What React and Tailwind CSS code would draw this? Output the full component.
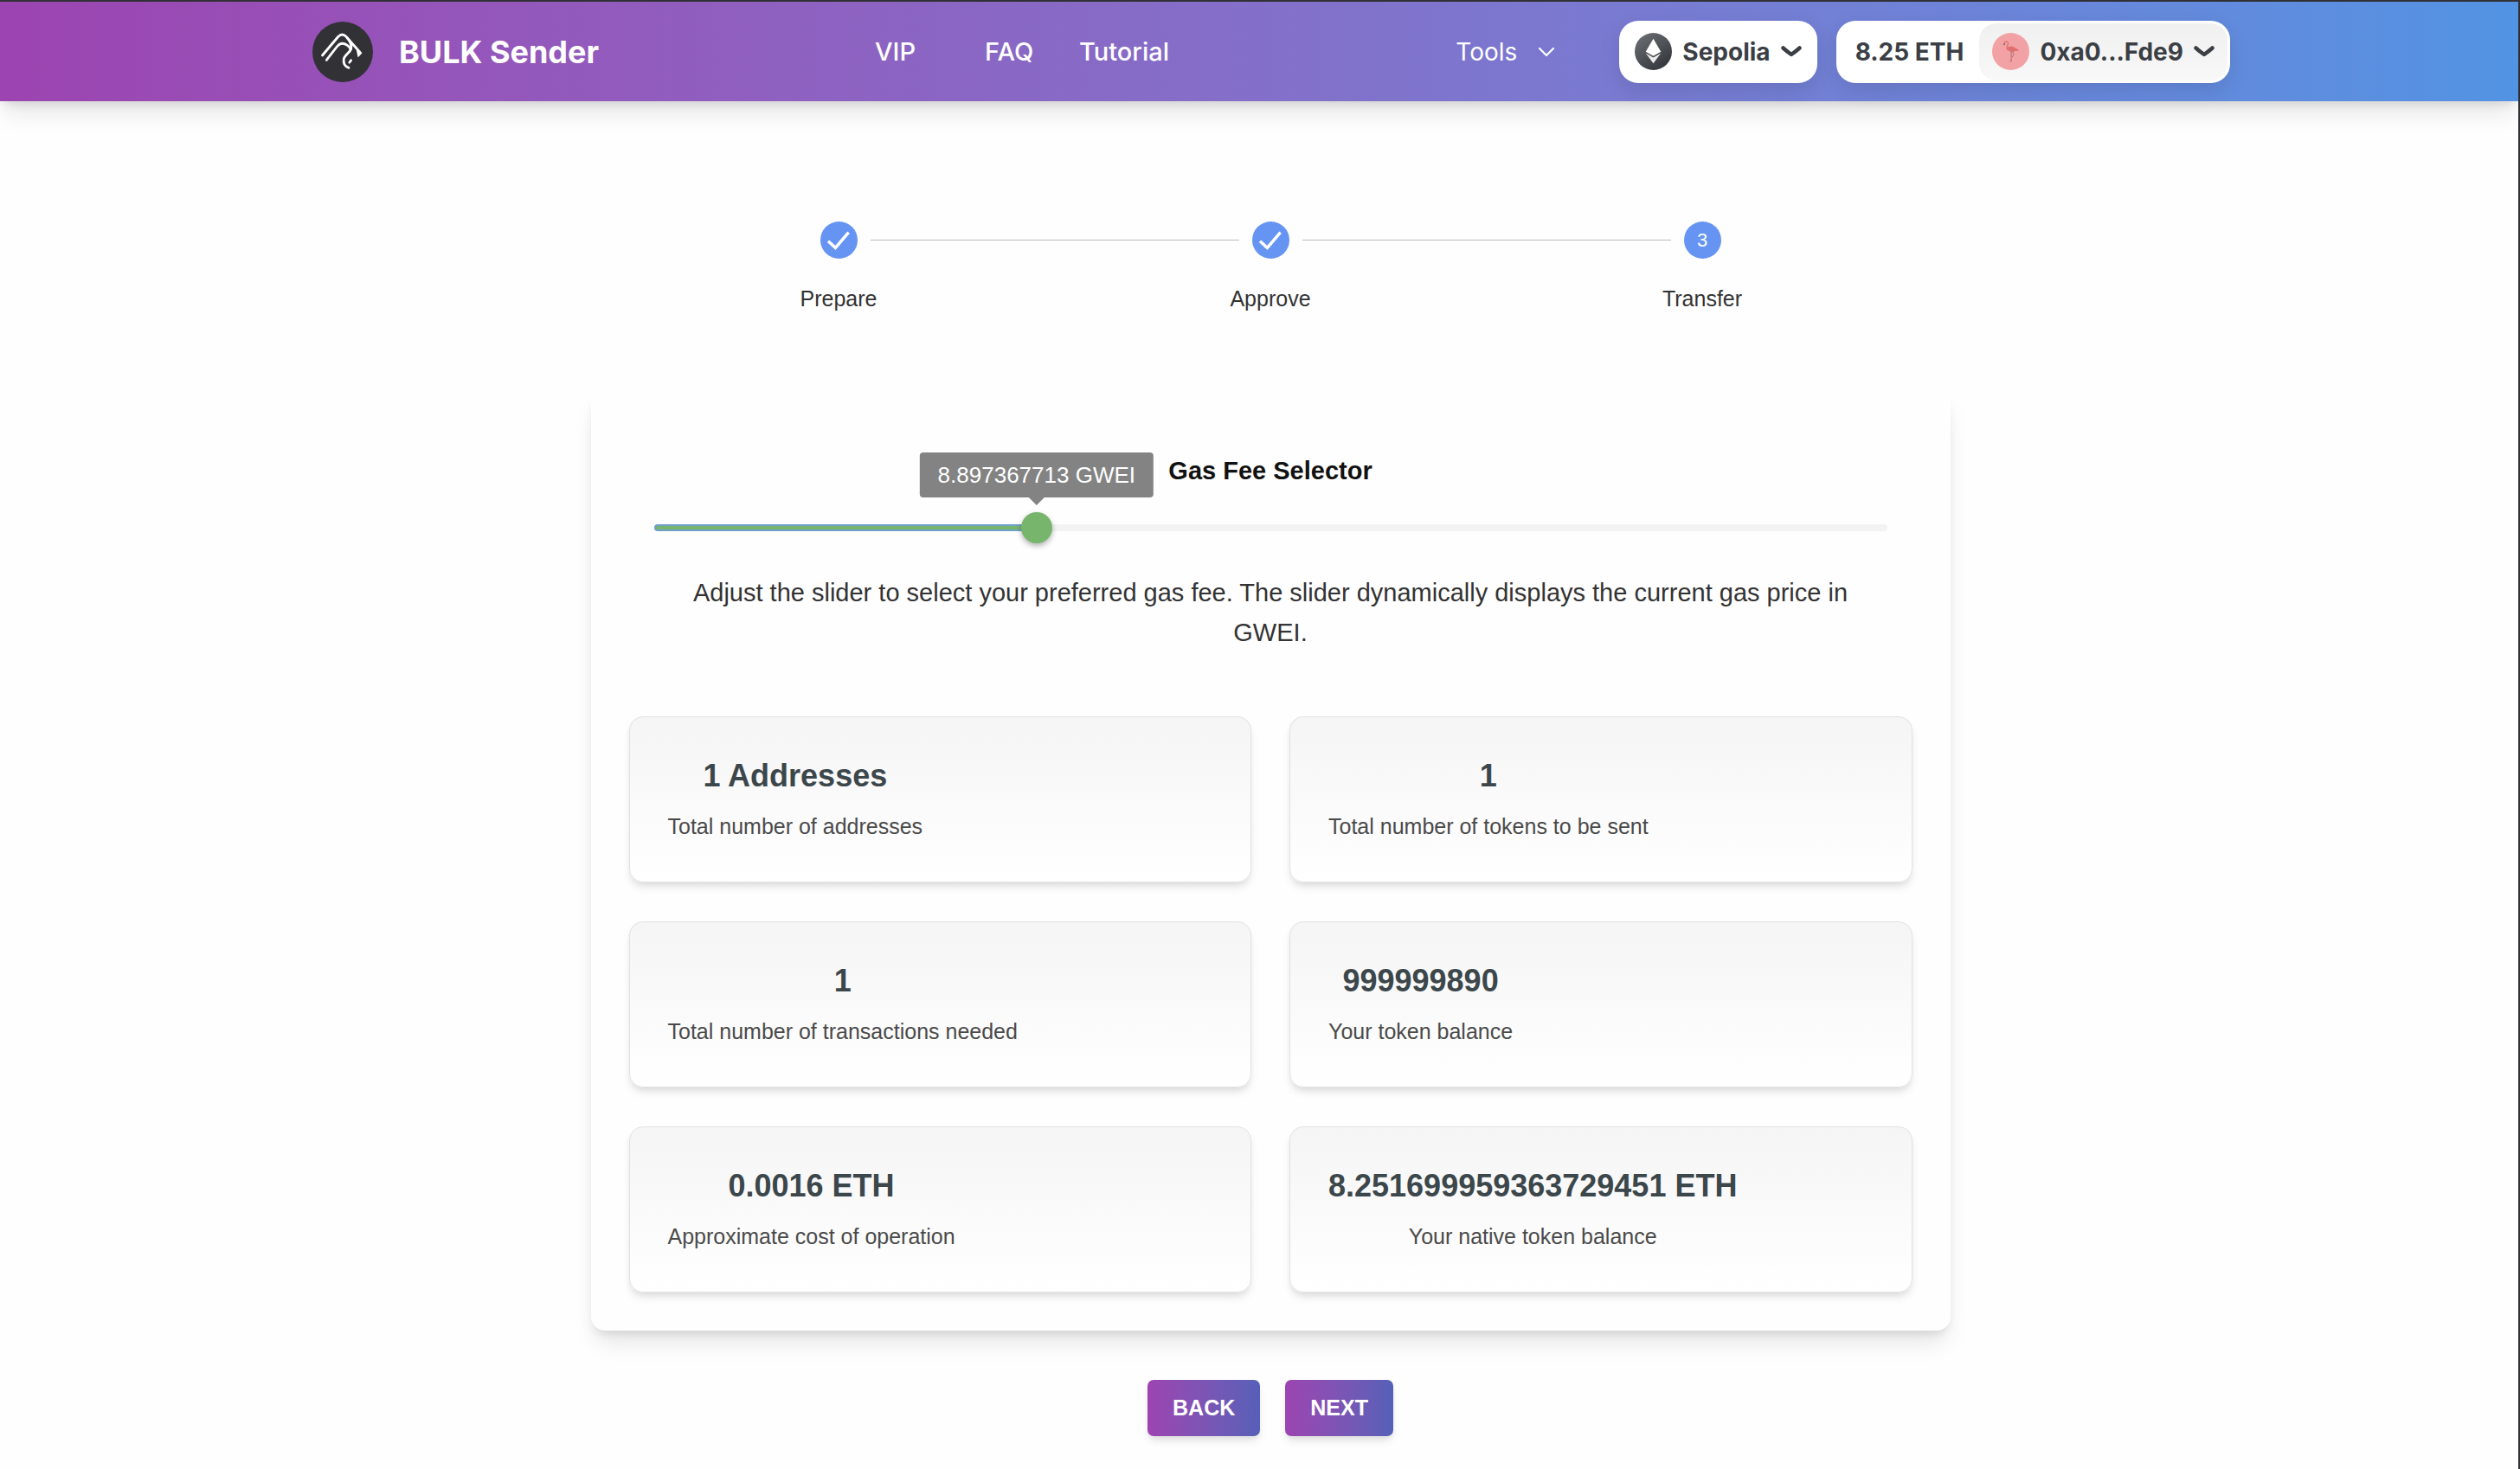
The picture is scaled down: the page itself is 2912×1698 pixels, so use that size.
import React, { useState } from "react";

const steps = [
  { label: "Prepare", done: true },
  { label: "Approve", done: true },
  { label: "Transfer", done: false },
];

const stats = [
  { value: "1 Addresses", label: "Total number of addresses" },
  { value: "1", label: "Total number of tokens to be sent" },
  { value: "1", label: "Total number of transactions needed" },
  { value: "999999890", label: "Your token balance" },
  { value: "0.0016 ETH", label: "Approximate cost of operation" },
  { value: "8.251699959363729451 ETH", label: "Your native token balance" },
];

function Logo() {
  return (
    <svg viewBox="0 0 70 70" className="size-[70px] shrink-0" aria-hidden="true">
      <circle cx="35" cy="35" r="35" fill="#323236" />
      <g fill="none" stroke="#fff" strokeWidth="2.8" strokeLinecap="round" strokeLinejoin="round">
        <path d="M11.500 39 L29.700 17.500 Q34.300 12.800 39 17.300 L55 35.500" />
        <path d="M16.300 44.300 L28.300 29 Q33.500 22.500 40 27.200 Q43.500 29.500 44 32" />
        <path d="M40 18.500 Q46 25 44.700 31.500 C43.500 35.500 37.500 38.500 36.300 43 Q35 51 42 53.300" />
      </g>
      <path d="M50.500 31 L57.500 36.200 L52.600 41.500 Z" fill="#fff" />
      <ellipse cx="43.700" cy="46" rx="1.500" ry="3" transform="rotate(35 43.700 46)" fill="#fff" />
    </svg>
  );
}

function EthIcon() {
  return (
    <svg viewBox="0 0 28 28" className="size-[43px] shrink-0" aria-hidden="true">
      <defs>
        <linearGradient id="eth" x1="0" y1="0" x2="0.700" y2="1">
          <stop offset="0" stopColor="#6f7377" />
          <stop offset="1" stopColor="#34373c" />
        </linearGradient>
      </defs>
      <circle cx="14" cy="14" r="14" fill="url(#eth)" />
      <path d="M14 4.400 L8.300 14.100 L14 17.400 L19.700 14.100 Z" fill="#fff" />
      <path d="M8.300 15.300 L14 23 L19.700 15.300 L14 18.500 Z" fill="#ededed" />
    </svg>
  );
}

function Flamingo() {
  return (
    <svg viewBox="0 0 44 44" className="size-[43px] shrink-0" aria-hidden="true">
      <circle cx="22" cy="22" r="22" fill="#f2a2a4" />
      <path d="M14.800 12 Q15 10 16.800 10.200 Q19.800 10.800 18.600 14 Q16.500 17.500 18 19.500" fill="none" stroke="#e0706f" strokeWidth="1.300" strokeLinecap="round" />
      <path d="M13.600 12.300 L14 15 L15.700 13 Z" fill="#6b4a4a" />
      <path d="M17 18.500 Q18.500 15.500 22.500 15.800 Q27.500 16.500 32 21.300 Q29 21 27.500 21.500 Q24 23 21 22 Q17.500 21 17 18.500 Z" fill="#e0706f" />
      <path d="M22.600 22 L22.600 33.500 M24 22 L25.600 25.500 L23.500 29 M21 33.500 H23.500" fill="none" stroke="#a8696b" strokeWidth="0.900" />
    </svg>
  );
}

function Chevron({ className, width }) {
  return (
    <svg viewBox="0 0 24 13" className={className} aria-hidden="true">
      <path d="M2.500 2.500 Q7 6.500 12 10 Q17 6.500 21.500 2.500" fill="none" stroke="currentColor" strokeWidth={width} strokeLinecap="round" strokeLinejoin="round" />
    </svg>
  );
}

function Header() {
  return (
    <header className="relative h-[115px] bg-linear-to-r from-[#9c44b1] to-[#5293e3] pl-7 font-['Inter',sans-serif] text-white shadow-[0_18px_27px_-5px_rgba(0,0,0,0.1),0_7px_11px_-4px_rgba(0,0,0,0.1)]">
      <div className="mx-auto flex h-full w-full max-w-[2216px] items-center">
        <a href="#home" className="flex w-[650px] items-center gap-[30px]">
          <Logo />
          <span className="text-4xl font-bold">BULK Sender</span>
        </a>
        <nav className="flex items-center text-[29px] font-medium">
          <a href="#vip" className="w-[127px]">VIP</a>
          <a href="#faq" className="w-[109px]">FAQ</a>
          <a href="#tutorial">Tutorial</a>
        </nav>
        <div className="ml-auto flex items-center">
          <button type="button" className="mr-[74px] flex items-center gap-6 text-[28px]">
            Tools
            <svg viewBox="0 0 20 12" className="w-5" aria-hidden="true">
              <path d="M2 2 L10 10 L18 2" fill="none" stroke="currentColor" strokeWidth="2.200" strokeLinecap="round" strokeLinejoin="round" />
            </svg>
          </button>
          <button type="button" className="flex h-[72px] items-center gap-3 rounded-[22px] bg-white px-[18px] text-[28px] font-bold text-[#3b3f45] shadow-[0_8px_24px_rgba(0,0,0,0.1)]">
            <EthIcon />
            Sepolia
            <Chevron className="w-6" width="4.500" />
          </button>
          <button type="button" className="ml-[22px] flex h-[72px] items-center rounded-[22px] bg-white pr-[3px] pl-[22px] text-[28px] font-bold text-[#3b3f45] shadow-[0_8px_24px_rgba(0,0,0,0.1)]">
            8.25 ETH
            <span className="ml-[18px] flex h-[66px] items-center gap-3 rounded-[20px] bg-linear-to-b from-[#f0f0f0] to-[#f8f8f8] px-[15px]">
              <Flamingo />
              0xa0...Fde9
              <Chevron className="w-6" width="4.500" />
            </span>
          </button>
        </div>
      </div>
    </header>
  );
}

function Stepper() {
  return (
    <ol className="mx-auto grid w-full max-w-[1497px] grid-cols-3">
      {steps.map((step, i) => (
        <li key={step.label} className="flex flex-col items-center gap-6">
          <div className="flex w-full items-center gap-[15px]">
            <span className={i > 0 ? "h-px flex-1 bg-[#bdbdbd]" : "h-px flex-1"} />
            <span className="flex size-[43px] items-center justify-center rounded-full bg-[#6594f2] text-[22px] text-white">
              {step.done ? (
                <svg viewBox="0 0 24 24" className="size-8" aria-hidden="true">
                  <path d="M3 12.500 L9.300 18.300 L20.700 5" fill="none" stroke="#fff" strokeWidth="2.600" />
                </svg>
              ) : (
                i + 1
              )}
            </span>
            <span className={i < 2 ? "h-px flex-1 bg-[#bdbdbd]" : "h-px flex-1"} />
          </div>
          <span className="text-[25px] leading-[44px] text-[#333]">{step.label}</span>
        </li>
      ))}
    </ol>
  );
}

function GasSlider() {
  const [gas, setGas] = useState(31.04);
  const price = gas === 31.04 ? "8.897367713" : (gas * 0.28664).toFixed(9);
  return (
    <div className="relative mx-[29px] h-9">
      <div className="absolute inset-x-0 top-[14px] h-2 rounded-full bg-[#f3f3f3]">
        <div className="h-full rounded-full border-y-2 border-l-2 border-[#6fa0c8] bg-[#77b56d]" style={{ width: `${gas}%` }} />
      </div>
      <input
        id="gas-fee"
        type="range"
        min="0"
        max="100"
        step="0.01"
        value={gas}
        onChange={(e) => setGas(Number(e.target.value))}
        className="absolute -inset-x-[18px] top-0 h-9 cursor-pointer appearance-none bg-transparent [&::-webkit-slider-thumb]:size-9 [&::-webkit-slider-thumb]:appearance-none [&::-webkit-slider-thumb]:rounded-full [&::-webkit-slider-thumb]:bg-[#77b56d] [&::-webkit-slider-thumb]:shadow-[0_3px_6px_rgba(0,0,0,0.3)]"
      />
      <output htmlFor="gas-fee" className="absolute bottom-[53px] flex h-[52px] -translate-x-1/2 items-center rounded bg-[#838383] px-[21px] text-[26px] whitespace-nowrap text-white" style={{ left: `${gas}%` }}>
        {price} GWEI
        <span className="absolute top-full left-1/2 -translate-x-1/2 border-x-[9px] border-t-[9px] border-x-transparent border-t-[#838383]" />
      </output>
    </div>
  );
}

function Stat({ value, label }) {
  return (
    <div className="flex rounded-2xl border border-[#e2e2e2] bg-linear-to-b from-[#f5f5f5] to-white px-11 pt-[42px] pb-[43px] shadow-[0_7px_11px_-2px_rgba(0,0,0,0.1),0_4px_7px_-2px_rgba(0,0,0,0.06)]">
      <dl className="flex flex-col-reverse gap-[11px] text-center">
        <dt className="text-[25px] leading-[42px] text-[#4a4a4a]">{label}</dt>
        <dd className="text-4xl leading-[52px] font-bold text-[#3c474b]">{value}</dd>
      </dl>
    </div>
  );
}

const actionClass =
  "h-[65px] rounded-[7px] bg-linear-to-r from-[#9c44b1] to-[#5560b8] px-[29px] text-[25px] font-bold text-white shadow-[0_7px_11px_-2px_rgba(0,0,0,0.1),0_4px_7px_-2px_rgba(0,0,0,0.06)]";

export default function App() {
  return (
    <div className="min-h-screen border-t-2 border-r-2 border-[#323236] bg-[#fefefe] font-['Liberation_Sans',Arial,sans-serif]">
      <Header />
      <main className="pt-[139px] pb-[38px] pl-[26px]">
        <Stepper />
        <section className="mx-auto mt-[85px] w-full max-w-[1571px] rounded-2xl bg-[#fefefe] p-11 shadow-[0_18px_27px_-5px_rgba(0,0,0,0.1),0_7px_11px_-4px_rgba(0,0,0,0.1)]">
          <label htmlFor="gas-fee" className="mt-[24px] block text-center text-[29px] leading-[48px] font-bold text-[#111]">
            Gas Fee Selector
          </label>
          <div className="mt-6">
            <GasSlider />
          </div>
          <p className="mx-auto mt-[34px] max-w-[1400px] text-center text-[29px] leading-[46px] text-[#333]">
            Adjust the slider to select your preferred gas fee. The slider dynamically displays the current gas price in GWEI.
          </p>
          <div className="mt-[74px] grid grid-cols-2 gap-x-11 gap-y-[45px]">
            {stats.map((s, i) => (
              <Stat key={i} {...s} />
            ))}
          </div>
        </section>
        <div className="mt-[57px] flex justify-center gap-[29px]">
          <button type="button" className={actionClass}>BACK</button>
          <button type="button" className={actionClass}>NEXT</button>
        </div>
      </main>
    </div>
  );
}
